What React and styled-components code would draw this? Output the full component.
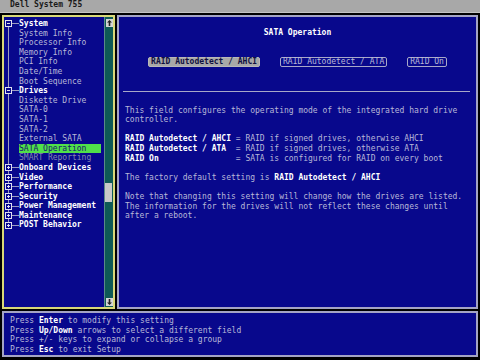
import React from "react";
import styled, { createGlobalStyle } from "styled-components";

const Global = createGlobalStyle`
  html, body { margin: 0; padding: 0; background: #000; }
  body { width: 480px; height: 360px; overflow: hidden; }
  * { box-sizing: border-box; }
`;

const BLUE = "#08088c";
const TEXT = "#b8b8d8";
const MONO = `"DejaVu Sans Mono", "Liberation Mono", monospace`;

const Screen = styled.div`
  width: 480px;
  height: 360px;
  background: #000;
  display: flex;
  flex-direction: column;
  font-family: ${MONO};
  font-size: 8px;
  line-height: 9.6px;
  color: ${TEXT};
`;

const TitleBar = styled.div`
  height: 13px;
  background: #a8a8a8;
  border-bottom: 1px solid #c4c4c4;
  color: #1a1a1a;
  font-weight: bold;
  line-height: 10px;
  padding-left: 10px;
`;

const Main = styled.div`
  display: flex;
  gap: 2px;
  padding: 2px 2px 0 2px;
  height: 296px;
`;

const TreePanel = styled.div`
  width: 113px;
  background: ${BLUE};
  border: 2px solid #d8d878;
  display: flex;
`;

const Tree = styled.div`
  flex: 1;
  padding-top: 2px;
  display: flex;
  flex-direction: column;
`;

const Row = styled.div`
  display: flex;
  height: 9.6px;
  align-items: center;
`;

const Gutter = styled.span`
  width: 15px;
  height: 100%;
  flex: none;
  display: flex;
  align-items: center;
  background-image: linear-gradient(#9c9cc0, #9c9cc0);
  background-repeat: no-repeat;
  background-size: ${(p) => (p.$pos === "first" || p.$pos === "last" ? "1px 50%" : "1px 100%")};
  background-position: ${(p) => (p.$pos === "first" ? "4px 100%" : "4px 0")};
`;

const Connector = styled.span`
  flex: 1;
  height: 1px;
  background: #9c9cc0;
`;

const Label = styled.span`
  display: inline-block;
  white-space: pre;
  width: ${(p) => (p.$selected ? "82px" : "auto")};
  background: ${(p) => (p.$selected ? "#50e04a" : "transparent")};
  color: ${(p) =>
    p.$selected ? "#14146e" : p.$group ? "#ffffff" : p.$dim ? "#8484b0" : TEXT};
  font-weight: ${(p) => (p.$group ? "bold" : "normal")};
  line-height: 9.6px;
`;

const ScrollBar = styled.div`
  width: 9px;
  flex: none;
  background: #0e5a56;
  border-left: 1px solid #5a8a88;
  display: flex;
  flex-direction: column;
  align-items: center;
  justify-content: space-between;
  padding: 2px 0 1px;
  position: relative;
`;

const ArrowBox = styled.div`
  width: 7px;
  height: 8px;
  background: #d4d4d4;
  display: flex;
  align-items: center;
  justify-content: center;
`;

const Thumb = styled.div`
  position: absolute;
  left: 0;
  top: 166px;
  width: 7px;
  height: 19px;
  background: #c8c8c8;
`;

const InfoPanel = styled.div`
  flex: 1;
  background: ${BLUE};
  border: 2px solid #a4a4c4;
  display: flex;
  flex-direction: column;
`;

const Heading = styled.div`
  margin-top: 11px;
  text-align: center;
  color: #fff;
  font-weight: bold;
`;

const Options = styled.div`
  margin-top: 19px;
  display: flex;
  justify-content: center;
  gap: 20px;
`;

const Option = styled.span`
  white-space: pre;
  line-height: 8px;
  padding: 0 2px;
  border: 1px solid ${(p) => (p.$active ? "#b8b8b8" : "#a8a8c8")};
  border-radius: 2px;
  background: ${(p) => (p.$active ? "#a8a8a8" : "transparent")};
  color: ${(p) => (p.$active ? "#101040" : TEXT)};
  font-weight: ${(p) => (p.$active ? "bold" : "normal")};
`;

const Divider = styled.div`
  margin: 24px 6px 0 4px;
  height: 1px;
  background: #a8a8c8;
`;

const Body = styled.div`
  margin-top: 14px;
  padding-left: 6px;
  white-space: pre;
`;

const Line = styled.div`
  height: 9.6px;
`;

const Strong = styled.span`
  color: #fff;
  font-weight: bold;
`;

const HelpPanel = styled.div`
  margin: 2px 2px 0 2px;
  height: 46px;
  background: ${BLUE};
  border: 2px solid #a4a4c4;
  padding: 3px 0 0 6px;
  white-space: pre;
`;

const Box = ({ open }) => (
  <svg width="7" height="7" viewBox="0 0 7 7" style={{ marginLeft: 1, flex: "none" }}>
    <rect x="0.5" y="0.5" width="6" height="6" fill={BLUE} stroke="#e0e0f0" strokeWidth="1" />
    <line x1="2" y1="3.5" x2="5" y2="3.5" stroke="#e0e0f0" strokeWidth="1" />
    {!open && <line x1="3.5" y1="2" x2="3.5" y2="5" stroke="#e0e0f0" strokeWidth="1" />}
  </svg>
);

const Arrow = ({ up }) => (
  <svg width="5" height="6" viewBox="0 0 5 6">
    <path
      d={up ? "M2.5 0 L5 2.5 L3.3 2.5 L3.3 6 L1.7 6 L1.7 2.5 L0 2.5 Z" : "M2.5 6 L5 3.5 L3.3 3.5 L3.3 0 L1.7 0 L1.7 3.5 L0 3.5 Z"}
      fill="#202020"
    />
  </svg>
);

const tree = [
  { label: "System", group: true, open: true },
  { label: "System Info" },
  { label: "Processor Info" },
  { label: "Memory Info" },
  { label: "PCI Info" },
  { label: "Date/Time" },
  { label: "Boot Sequence" },
  { label: "Drives", group: true, open: true },
  { label: "Diskette Drive" },
  { label: "SATA-0" },
  { label: "SATA-1" },
  { label: "SATA-2" },
  { label: "External SATA" },
  { label: "SATA Operation", selected: true },
  { label: "SMART Reporting", dim: true },
  { label: "Onboard Devices", group: true },
  { label: "Video", group: true },
  { label: "Performance", group: true },
  { label: "Security", group: true },
  { label: "Power Management", group: true },
  { label: "Maintenance", group: true },
  { label: "POST Behavior", group: true },
];

export default function App() {
  return (
    <>
      <Global />
      <Screen>
        <TitleBar>Dell System 755</TitleBar>
        <Main>
          <TreePanel>
            <Tree>
              {tree.map((n, i) => {
                const pos = i === 0 ? "first" : i === tree.length - 1 ? "last" : "mid";
                return (
                  <Row key={n.label}>
                    <Gutter $pos={pos}>
                      {n.group && (
                        <>
                          <Box open={n.open} />
                          <Connector />
                        </>
                      )}
                    </Gutter>
                    <Label $group={n.group} $selected={n.selected} $dim={n.dim}>
                      {n.label}
                    </Label>
                  </Row>
                );
              })}
            </Tree>
            <ScrollBar>
              <ArrowBox>
                <Arrow up />
              </ArrowBox>
              <Thumb />
              <ArrowBox>
                <Arrow />
              </ArrowBox>
            </ScrollBar>
          </TreePanel>
          <InfoPanel>
            <Heading>SATA Operation</Heading>
            <Options>
              <Option $active>RAID Autodetect / AHCI</Option>
              <Option>RAID Autodetect / ATA</Option>
              <Option>RAID On</Option>
            </Options>
            <Divider />
            <Body>
              <Line>This field configures the operating mode of the integrated hard drive</Line>
              <Line>controller.</Line>
              <Line />
              <Line>
                <Strong>RAID Autodetect / AHCI</Strong> = RAID if signed drives, otherwise AHCI
              </Line>
              <Line>
                <Strong>RAID Autodetect / ATA</Strong>  = RAID if signed drives, otherwise ATA
              </Line>
              <Line>
                <Strong>RAID On</Strong>                = SATA is configured for RAID on every boot
              </Line>
              <Line />
              <Line>
                The factory default setting is <Strong>RAID Autodetect / AHCI</Strong>
              </Line>
              <Line />
              <Line>Note that changing this setting will change how the drives are listed.</Line>
              <Line>The information for the drives will not reflect these changes until</Line>
              <Line>after a reboot.</Line>
            </Body>
          </InfoPanel>
        </Main>
        <HelpPanel>
          <Line>
            Press <Strong>Enter</Strong> to modify this setting
          </Line>
          <Line>
            Press <Strong>Up/Down</Strong> arrows to select a different field
          </Line>
          <Line>Press +/- keys to expand or collapse a group</Line>
          <Line>
            Press <Strong>Esc</Strong> to exit Setup
          </Line>
        </HelpPanel>
      </Screen>
    </>
  );
}
